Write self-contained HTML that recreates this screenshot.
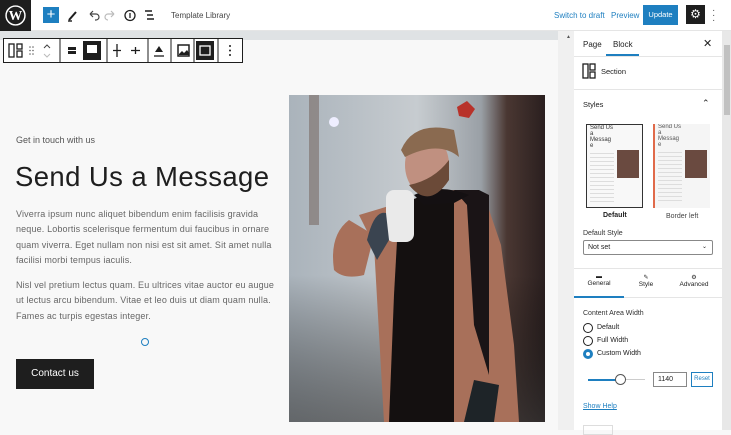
<!DOCTYPE html><html><head><style>
*{margin:0;padding:0;box-sizing:border-box}
body{width:731px;height:430px;overflow:hidden;background:#f8f8f8;font-family:"Liberation Sans",sans-serif;position:relative;color:#1e1e1e}
.a{position:absolute}
</style></head><body>
<div class="a" style="left:0;top:0;width:731px;height:31px;background:#fff;border-bottom:1px solid #e5e5e5"></div>
<div class="a" style="left:0;top:0;width:31px;height:31px;background:#1e1e1e"></div>
<svg class="a" style="left:5px;top:5px" width="21" height="21" viewBox="0 0 20 20"><circle cx="10" cy="10" r="9" fill="none" stroke="#fff" stroke-width="1.4"/><text x="10" y="14.5" text-anchor="middle" font-family="Liberation Serif" font-size="13" font-weight="bold" fill="#fff">W</text></svg>
<div class="a" style="left:43px;top:7px;width:16px;height:16px;background:#1e7fc0;color:#fff;font-size:15px;line-height:15px;text-align:center">+</div>
<svg class="a" style="left:66px;top:8px" width="95" height="15"><path d="M3 12 L10 4" stroke="#1e1e1e" stroke-width="2"/><path d="M2 13h4" stroke="#1e1e1e" stroke-width="1.4"/><path d="M24 6h6a3 3 0 010 6h-1M24 6l3-3M24 6l3 3" stroke="#444" fill="none" stroke-width="1.2"/><path d="M48 6h-6a3 3 0 000 6M48 6l-3-3M48 6l-3 3" stroke="#bbb" fill="none" stroke-width="1.2"/><circle cx="64" cy="7.5" r="5" fill="none" stroke="#1e1e1e" stroke-width="1.3"/><path d="M64 5v5" stroke="#1e1e1e" stroke-width="1.3"/><path d="M79 3h7M81 7h6M81 11h7" stroke="#1e1e1e" stroke-width="1.4"/></svg>
<div class="a" style="left:171px;top:11px;font-size:8px;color:#444">Template Library</div>
<div class="a" style="left:554px;top:11px;font-size:8px;color:#1e7fc0">Switch to draft</div>
<div class="a" style="left:611px;top:11px;font-size:8px;color:#1e7fc0">Preview</div>
<div class="a" style="left:643px;top:5px;width:35px;height:20px;background:#1e7fc0;color:#fff;font-size:7.5px;line-height:20px;text-align:center">Update</div>
<div class="a" style="left:686px;top:5px;width:19px;height:19px;background:#1e1e1e;color:#fff;font-size:12px;line-height:19px;text-align:center">⚙</div>
<div class="a" style="left:712px;top:8px;font-size:10px;color:#555;line-height:5px">·<br>·<br>·</div>
<div class="a" style="left:0;top:31px;width:558px;height:9px;background:#dfe2e4"></div>
<div class="a" style="left:558px;top:31px;width:16px;height:399px;background:#f0f0f0"></div>
<div class="a" style="left:566px;top:34px;font-size:5px;color:#555">▲</div>
<div class="a" style="left:3px;top:38px;width:240px;height:25px;background:#fff;border:1px solid #1e1e1e"></div>
<svg class="a" style="left:3px;top:38px" width="240" height="25">
<rect x="6" y="6" width="5" height="13" fill="none" stroke="#1e1e1e" stroke-width="1.3"/><rect x="14" y="6" width="5" height="5" fill="none" stroke="#1e1e1e" stroke-width="1.3"/><rect x="14" y="13" width="5" height="6" fill="none" stroke="#1e1e1e" stroke-width="1.3"/>
<g fill="#666"><circle cx="27" cy="9" r=".8"/><circle cx="30" cy="9" r=".8"/><circle cx="27" cy="12.5" r=".8"/><circle cx="30" cy="12.5" r=".8"/><circle cx="27" cy="16" r=".8"/><circle cx="30" cy="16" r=".8"/></g>
<path d="M41 10l3-3 3 3" stroke="#444" fill="none"/><path d="M41 16l3 3 3-3" stroke="#bbb" fill="none"/>
<line x1="57" y1="0" x2="57" y2="25" stroke="#1e1e1e"/>
<rect x="65" y="9" width="8" height="7" fill="#1e1e1e"/><path d="M64 12.5h10" stroke="#fff"/>
<rect x="80" y="3" width="18" height="19" fill="#1e1e1e"/><rect x="84" y="7" width="10" height="8" fill="#fff"/>
<line x1="104" y1="0" x2="104" y2="25" stroke="#1e1e1e"/>
<path d="M114 6v13M110 12.5h8" stroke="#1e1e1e" stroke-width="1.3"/><path d="M128 12.5h9M132.5 9v7" stroke="#1e1e1e" stroke-width="1.3"/>
<line x1="145" y1="0" x2="145" y2="25" stroke="#1e1e1e"/>
<path d="M152 14l4-6 4 6z" fill="#1e1e1e"/><path d="M151 18h10" stroke="#1e1e1e" stroke-width="1.3"/>
<line x1="168" y1="0" x2="168" y2="25" stroke="#1e1e1e"/>
<rect x="175" y="7" width="11" height="11" fill="none" stroke="#1e1e1e" stroke-width="1.5"/><path d="M176 16l3-3 2 2 3-3 2 3v2h-10z" fill="#1e1e1e"/>
<line x1="191" y1="0" x2="191" y2="25" stroke="#1e1e1e"/>
<rect x="193" y="3" width="18" height="19" fill="#1e1e1e"/><rect x="197" y="8" width="10" height="9" fill="none" stroke="#fff" stroke-width="1.3"/>
<line x1="215" y1="0" x2="215" y2="25" stroke="#1e1e1e"/>
<g fill="#1e1e1e"><circle cx="227" cy="8" r="1"/><circle cx="227" cy="12.5" r="1"/><circle cx="227" cy="17" r="1"/></g>
</svg>
<div class="a" style="left:16px;top:135px;font-size:9px;color:#555">Get in touch with us</div>
<div class="a" style="left:15px;top:161px;font-size:27.5px;color:#1e1e1e;letter-spacing:.4px">Send Us a Message</div>
<div class="a" style="left:16px;top:207px;width:262px;font-size:9px;letter-spacing:.15px;line-height:15.3px;color:#666">Viverra ipsum nunc aliquet bibendum enim facilisis gravida neque. Lobortis scelerisque fermentum dui faucibus in ornare quam viverra. Eget nullam non nisi est sit amet. Sit amet nulla facilisi morbi tempus iaculis.</div>
<div class="a" style="left:16px;top:278px;width:262px;font-size:9px;letter-spacing:.15px;line-height:15.3px;color:#666">Nisl vel pretium lectus quam. Eu ultrices vitae auctor eu augue ut lectus arcu bibendum. Vitae et leo duis ut diam quam nulla. Fames ac turpis egestas integer.</div>
<div class="a" style="left:141px;top:338px;width:8px;height:8px;border:1.5px solid #1e7fc0;border-radius:50%"></div>
<div class="a" style="left:16px;top:359px;width:78px;height:30px;background:#1e1e1e;color:#fff;font-size:10px;line-height:30px;text-align:center">Contact us</div>
<svg class="a" style="left:289px;top:95px" width="256" height="327" viewBox="0 0 256 327">
<defs><linearGradient id="bg" x1="0" y1="0" x2="1" y2="0"><stop offset="0" stop-color="#aab3bb"/><stop offset=".5" stop-color="#c7ccd0"/><stop offset=".75" stop-color="#9aa0a6"/><stop offset=".85" stop-color="#4a3732"/><stop offset="1" stop-color="#2a1f1f"/></linearGradient>
<linearGradient id="gr" x1="0" y1="0" x2="0" y2="1"><stop offset="0" stop-color="#000" stop-opacity="0"/><stop offset="1" stop-color="#333" stop-opacity=".6"/></linearGradient></defs>
<rect width="256" height="327" fill="url(#bg)"/>
<rect y="180" width="256" height="147" fill="url(#gr)"/>
<rect x="20" y="0" width="10" height="130" fill="#7a6a66" opacity=".6"/>
<path d="M70 120 L85 150 L95 327 L230 327 L225 250 L212 150 L195 100 L165 95 L120 105 Z" fill="#a8705a"/>
<path d="M45 175 Q40 140 60 125 L85 140 L75 180 Q55 185 45 175 Z" fill="#a8705a"/>
<path d="M110 110 L105 200 L100 327 L165 327 L165 100 L140 98 Z" fill="#141010"/>
<path d="M165 95 L190 95 L200 100 L200 280 L185 230 L178 110 Z" fill="#1a1416"/>
<path d="M125 100 Q150 88 180 100 L165 108 L135 110 Z" fill="#141012"/>
<ellipse cx="138" cy="70" rx="22" ry="30" fill="#c09080"/>
<path d="M120 90 Q140 115 160 85 L160 65 Q145 85 120 90Z" fill="#6b4a38"/>
<path d="M112 55 Q125 25 165 35 L170 62 Q150 45 116 62 Z" fill="#8a6a50"/>
<rect x="97" y="95" width="28" height="52" rx="8" fill="#eaeaea"/>
<path d="M78 145 Q85 115 97 118 L100 145 L88 165 Z" fill="#3a4450"/>
<path d="M175 327 L185 285 L210 290 L205 327Z" fill="#1e2428"/>
<path d="M168 12 l10-6 8 8-6 9-10-2z" fill="#b8322a"/>
<circle cx="45" cy="27" r="5" fill="#eef"/>
</svg>
<div class="a" style="left:574px;top:31px;width:148px;height:399px;background:#fff"></div>
<div class="a" style="left:722px;top:31px;width:9px;height:399px;background:#e8e8e8"></div>
<div class="a" style="left:724px;top:45px;width:6px;height:70px;background:#c1c1c1"></div>
<div class="a" style="left:583px;top:40px;font-size:8px;color:#1e1e1e">Page</div>
<div class="a" style="left:613px;top:40px;font-size:8px;color:#1e1e1e">Block</div>
<div class="a" style="left:606px;top:54px;width:33px;height:2px;background:#1e7fc0"></div>
<div class="a" style="left:703px;top:37px;font-size:11px;color:#1e1e1e">✕</div>
<div class="a" style="left:574px;top:56px;width:148px;height:1px;background:#e5e5e5"></div>
<svg class="a" style="left:582px;top:63px" width="14" height="16"><rect x="1" y="1" width="5" height="14" fill="none" stroke="#1e1e1e" stroke-width="1.3"/><rect x="8" y="1" width="5" height="6" fill="none" stroke="#1e1e1e" stroke-width="1.3"/><rect x="8" y="9" width="5" height="6" fill="none" stroke="#1e1e1e" stroke-width="1.3"/></svg>
<div class="a" style="left:601px;top:67px;font-size:7.5px">Section</div>
<div class="a" style="left:574px;top:89px;width:148px;height:1px;background:#e5e5e5"></div>
<div class="a" style="left:583px;top:100px;font-size:7.5px">Styles</div>
<div class="a" style="left:702px;top:98px;font-size:9px">⌃</div>
<div class="a" style="left:586px;top:124px;width:57px;height:84px;border:1.5px solid #333;background:#f8f8f8;overflow:hidden"><div style="font-size:6px;line-height:6px;color:#333;padding:0 3px">Send Us<br>a<br>Messag<br>e</div><div style="position:absolute;left:30px;top:25px;width:22px;height:28px;background:#6a4a40"></div><div style="position:absolute;left:3px;top:28px;width:24px;height:50px;background:repeating-linear-gradient(#ddd 0 1px,transparent 1px 4px)"></div></div>
<div class="a" style="left:653px;top:124px;width:57px;height:84px;border-left:2px solid #e06a4a;background:#f5f5f5;overflow:hidden"><div style="font-size:6px;line-height:6px;color:#555;padding:0 3px">Send Us<br>a<br>Messag<br>e</div><div style="position:absolute;left:30px;top:26px;width:22px;height:28px;background:#6a4a40"></div><div style="position:absolute;left:3px;top:28px;width:24px;height:50px;background:repeating-linear-gradient(#ddd 0 1px,transparent 1px 4px)"></div></div>
<div class="a" style="left:603px;top:212px;font-size:7px;font-weight:bold">Default</div>
<div class="a" style="left:666px;top:213px;font-size:7px;color:#444">Border left</div>
<div class="a" style="left:583px;top:230px;font-size:7px;color:#333">Default Style</div>
<div class="a" style="left:583px;top:240px;width:130px;height:15px;border:1px solid #888;border-radius:2px;font-size:7px;line-height:13px;padding-left:4px">Not set<span style="position:absolute;right:5px;font-size:6px">⌄</span></div>
<div class="a" style="left:574px;top:268px;width:148px;height:1px;background:#e5e5e5"></div>
<div class="a" style="left:574px;top:297px;width:148px;height:1px;background:#e5e5e5"></div>
<div class="a" style="left:574px;top:296px;width:50px;height:2px;background:#1e7fc0"></div>
<div class="a" style="left:587px;top:274px;font-size:6px;width:24px;text-align:center">▬<br><span style="font-size:6.5px">General</span></div>
<div class="a" style="left:636px;top:274px;font-size:6px;width:20px;text-align:center">✎<br><span style="font-size:6.5px">Style</span></div>
<div class="a" style="left:678px;top:274px;font-size:6px;width:32px;text-align:center">⚙<br><span style="font-size:6.5px">Advanced</span></div>
<div class="a" style="left:583px;top:310px;font-size:7px;color:#333">Content Area Width</div>
<div class="a" style="left:583px;top:323px;width:10px;height:10px;border:1px solid #1e1e1e;border-radius:50%"></div><div class="a" style="left:597px;top:324px;font-size:7px">Default</div>
<div class="a" style="left:583px;top:336px;width:10px;height:10px;border:1px solid #1e1e1e;border-radius:50%"></div><div class="a" style="left:597px;top:337px;font-size:7px">Full Width</div>
<div class="a" style="left:583px;top:349px;width:10px;height:10px;border:3px solid #1e7fc0;border-radius:50%"></div><div class="a" style="left:597px;top:350px;font-size:7px">Custom Width</div>
<div class="a" style="left:588px;top:379px;width:32px;height:2px;background:#1e7fc0"></div>
<div class="a" style="left:620px;top:379px;width:25px;height:1px;background:#ccc"></div>
<div class="a" style="left:615px;top:374px;width:11px;height:11px;border:1px solid #555;border-radius:50%;background:#fff"></div>
<div class="a" style="left:653px;top:372px;width:34px;height:15px;border:1px solid #888;font-size:7px;line-height:13px;padding-left:4px">1140</div>
<div class="a" style="left:691px;top:372px;width:22px;height:15px;border:1px solid #1e7fc0;font-size:6px;line-height:13px;text-align:center;color:#1e7fc0">Reset</div>
<div class="a" style="left:583px;top:403px;font-size:7px;color:#1e7fc0;text-decoration:underline">Show Help</div>
<div class="a" style="left:583px;top:425px;width:30px;height:10px;border:1px solid #ddd"></div>
</body></html>
